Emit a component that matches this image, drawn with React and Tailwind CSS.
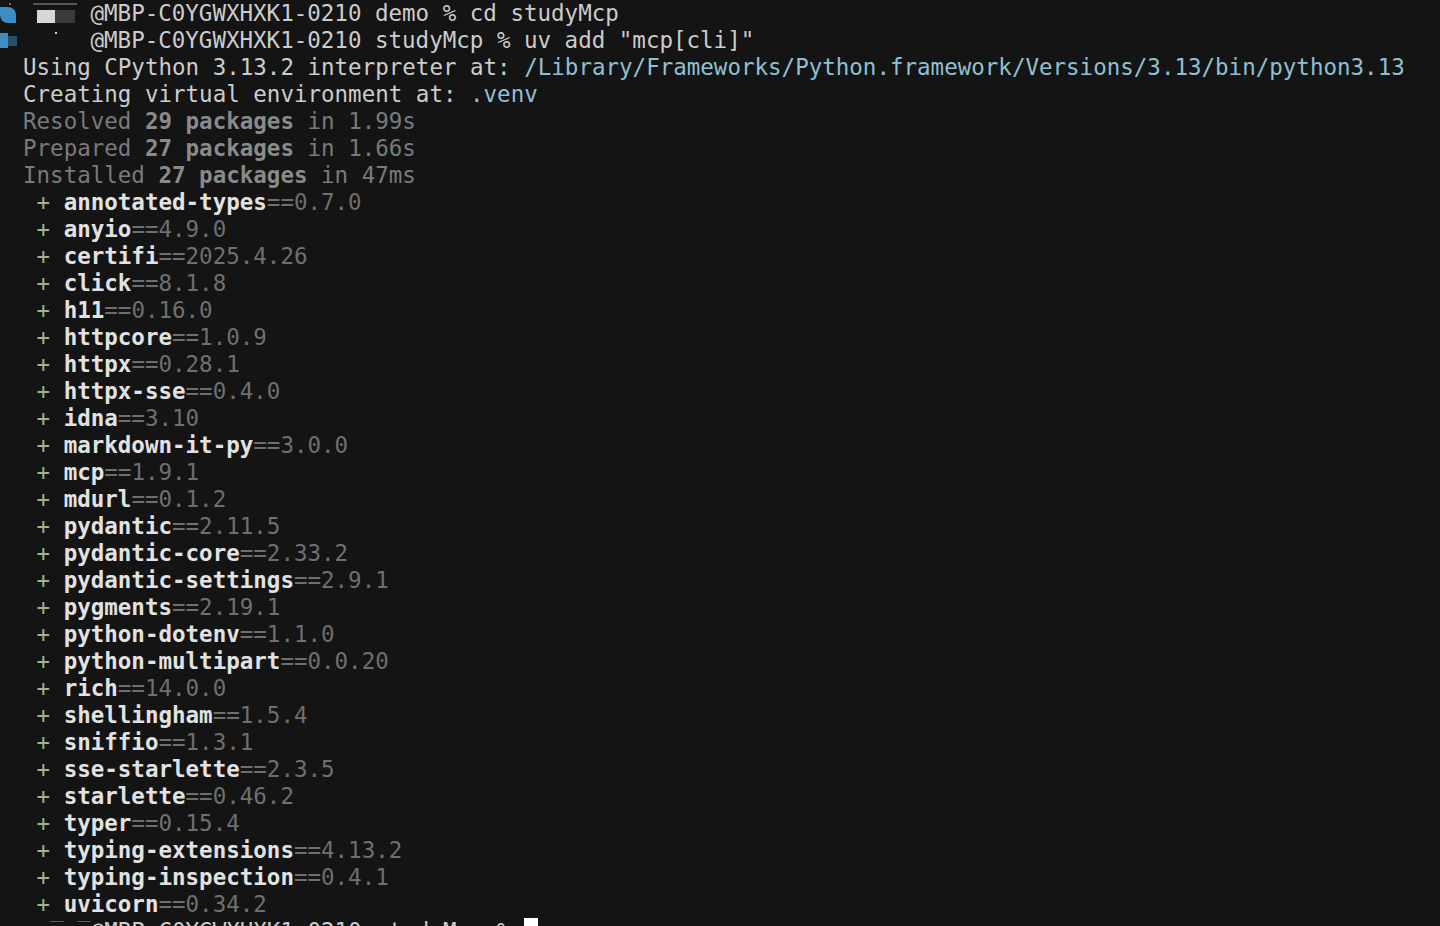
import React from 'react';

const pkgs = [
  ['annotated-types', '0.7.0'],
  ['anyio', '4.9.0'],
  ['certifi', '2025.4.26'],
  ['click', '8.1.8'],
  ['h11', '0.16.0'],
  ['httpcore', '1.0.9'],
  ['httpx', '0.28.1'],
  ['httpx-sse', '0.4.0'],
  ['idna', '3.10'],
  ['markdown-it-py', '3.0.0'],
  ['mcp', '1.9.1'],
  ['mdurl', '0.1.2'],
  ['pydantic', '2.11.5'],
  ['pydantic-core', '2.33.2'],
  ['pydantic-settings', '2.9.1'],
  ['pygments', '2.19.1'],
  ['python-dotenv', '1.1.0'],
  ['python-multipart', '0.0.20'],
  ['rich', '14.0.0'],
  ['shellingham', '1.5.4'],
  ['sniffio', '1.3.1'],
  ['sse-starlette', '2.3.5'],
  ['starlette', '0.46.2'],
  ['typer', '0.15.4'],
  ['typing-extensions', '4.13.2'],
  ['typing-inspection', '0.4.1'],
  ['uvicorn', '0.34.2'],
];

const Line = ({ gutter, children }) => (
  <div className="flex h-[27px] items-start">
    <div className="w-[23px] h-[27px] shrink-0">{gutter}</div>
    <div className="whitespace-pre h-[27px] leading-[27px]">{children}</div>
  </div>
);

// blurred-out user name in the prompt
const Redacted = ({ variant }) => (
  <span className="inline-block align-top w-[67.5px] h-[27px] relative">
    {variant === 'a' && (
      <>
        <span className="absolute left-[-14px] top-[3px] w-[2px] h-[2px] bg-[#6a6a6a]" />
        <span className="absolute left-[10px] top-[3px] w-[44px] h-[2px] bg-[#555555]" />
        <span className="absolute left-[14px] top-[10px] w-[18px] h-[13px] bg-[#d8d8d8]" />
        <span className="absolute left-[32px] top-[10px] w-[20px] h-[13px] bg-[#3a3a3a]" />
      </>
    )}
    {variant === 'b' && <span className="absolute left-[32px] top-[5px] w-[2px] h-[2px] bg-[#cfcfcf]" />}
  </span>
);

const Pkg = ({ name, ver }) => (
  <Line>
    <span className="text-[#9db588]"> + </span>
    <span className="font-bold text-[#e2e2e2]">{name}</span>
    <span className="text-[#6f6f6f]">=={ver}</span>
  </Line>
);

const Dim = ({ a, n, b }) => (
  <Line>
    <span className="text-[#7a7a7a]">{a} </span>
    <span className="font-bold text-[#8a8a8a]">{n} packages</span>
    <span className="text-[#7a7a7a]"> in {b}</span>
  </Line>
);

export default function App() {
  return (
    <div
      className="w-[1440px] h-[926px] overflow-hidden bg-[#141414] text-[#cccccc] text-[22.5px]"
      style={{ fontFamily: '"DejaVu Sans Mono", "Liberation Mono", monospace' }}
    >
      <div className="flex flex-col">
        <Line
          gutter={
            <svg width="18" height="27" viewBox="0 0 18 27">
              <path d="M0 7 H8 A8 8 0 0 1 16 15 V23 H8 A8 8 0 0 1 0 15 Z" fill="#3d8dc4" />
            </svg>
          }
        >
          <Redacted variant="a" />
          @MBP-C0YGWXHXK1-0210 demo % cd studyMcp
        </Line>
        <Line
          gutter={
            <svg width="18" height="27" viewBox="0 0 18 27">
              <rect x="8" y="9" width="9" height="10" fill="#26506c" />
              <path d="M0 6 H8 V21 H0 Z" fill="#3d8dc4" />
            </svg>
          }
        >
          <Redacted variant="b" />
          @MBP-C0YGWXHXK1-0210 studyMcp % uv add "mcp[cli]"
        </Line>
        <Line>
          Using CPython 3.13.2 interpreter at:{' '}
          <span className="text-[#8fc0d2]">/Library/Frameworks/Python.framework/Versions/3.13/bin/python3.13</span>
        </Line>
        <Line>
          Creating virtual environment at: <span className="text-[#8fc0d2]">.venv</span>
        </Line>
        <Dim a="Resolved" n="29" b="1.99s" />
        <Dim a="Prepared" n="27" b="1.66s" />
        <Dim a="Installed" n="27" b="47ms" />
        {pkgs.map(([n, v]) => (
          <Pkg key={n} name={n} ver={v} />
        ))}
        <Line>
          <span className="text-[#5c5c5c]">· ‾ ‾</span>
          @MBP-C0YGWXHXK1-0210 studyMcp %{' '}
          <span className="inline-block align-top w-[13.5px] h-[27px] bg-white" />
        </Line>
      </div>
    </div>
  );
}
